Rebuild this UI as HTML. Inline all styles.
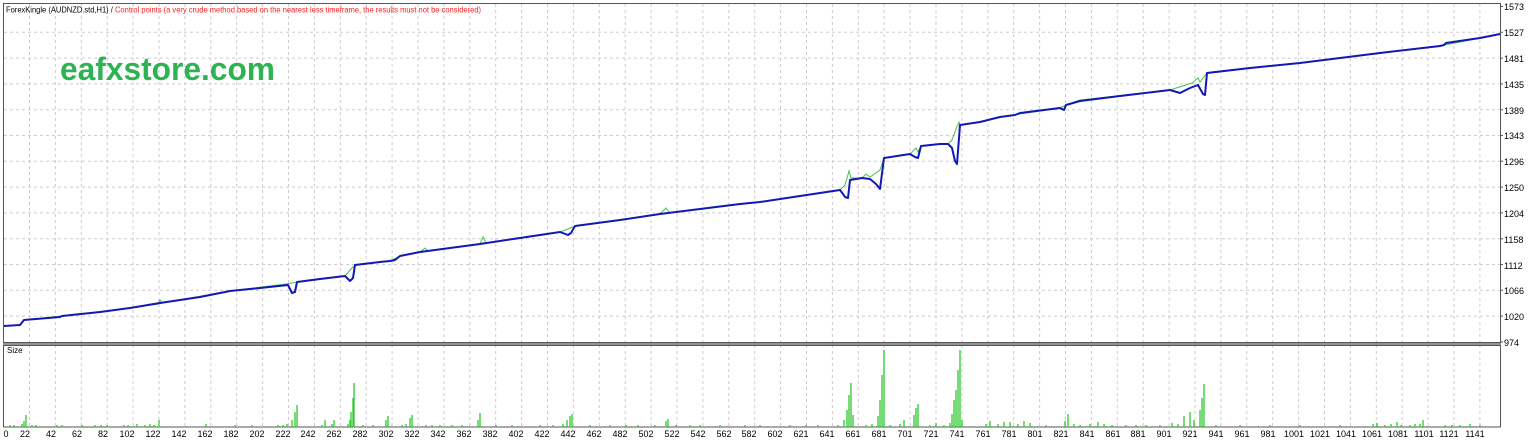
<!DOCTYPE html>
<html><head><meta charset="utf-8"><style>
html,body{margin:0;padding:0;background:#fff;width:1536px;height:441px;overflow:hidden}
svg text{font-family:"Liberation Sans",sans-serif;font-size:9px;fill:#000}
</style></head><body>
<svg width="1536" height="441" viewBox="0 0 1536 441" xmlns="http://www.w3.org/2000/svg">
<rect width="1536" height="441" fill="#fff"/>
<g stroke="#cfcacf" stroke-dasharray="3,3">
<line x1="4" x2="1500" y1="32.3" y2="32.3"/><line x1="4" x2="1500" y1="58.1" y2="58.1"/><line x1="4" x2="1500" y1="83.9" y2="83.9"/><line x1="4" x2="1500" y1="109.7" y2="109.7"/><line x1="4" x2="1500" y1="135.5" y2="135.5"/><line x1="4" x2="1500" y1="161.3" y2="161.3"/><line x1="4" x2="1500" y1="187.1" y2="187.1"/><line x1="4" x2="1500" y1="212.9" y2="212.9"/><line x1="4" x2="1500" y1="238.7" y2="238.7"/><line x1="4" x2="1500" y1="264.5" y2="264.5"/><line x1="4" x2="1500" y1="290.3" y2="290.3"/><line x1="4" x2="1500" y1="316.1" y2="316.1"/>
</g>
<g stroke="#cfcacf" stroke-dasharray="3,3">
<path d="M29.5 4V342M55.4 4V342M81.3 4V342M107.2 4V342M133.1 4V342M159 4V342M184.9 4V342M210.8 4V342M236.7 4V342M262.6 4V342M288.5 4V342M314.4 4V342M340.3 4V342M366.2 4V342M392.1 4V342M418 4V342M443.9 4V342M469.8 4V342M495.7 4V342M521.6 4V342M547.5 4V342M573.4 4V342M599.3 4V342M625.2 4V342M651.1 4V342M677 4V342M702.9 4V342M728.8 4V342M754.7 4V342M780.6 4V342M806.5 4V342M832.4 4V342M858.3 4V342M884.2 4V342M910.1 4V342M936 4V342M961.9 4V342M987.8 4V342M1013.7 4V342M1039.6 4V342M1065.5 4V342M1091.4 4V342M1117.3 4V342M1143.2 4V342M1169.1 4V342M1195 4V342M1220.9 4V342M1246.8 4V342M1272.7 4V342M1298.6 4V342M1324.5 4V342M1350.4 4V342M1376.3 4V342M1402.2 4V342M1428.1 4V342M1454 4V342M1479.9 4V342"/>
<path transform="translate(0,345)" d="M29.5 0V82M55.4 0V82M81.3 0V82M107.2 0V82M133.1 0V82M159 0V82M184.9 0V82M210.8 0V82M236.7 0V82M262.6 0V82M288.5 0V82M314.4 0V82M340.3 0V82M366.2 0V82M392.1 0V82M418 0V82M443.9 0V82M469.8 0V82M495.7 0V82M521.6 0V82M547.5 0V82M573.4 0V82M599.3 0V82M625.2 0V82M651.1 0V82M677 0V82M702.9 0V82M728.8 0V82M754.7 0V82M780.6 0V82M806.5 0V82M832.4 0V82M858.3 0V82M884.2 0V82M910.1 0V82M936 0V82M961.9 0V82M987.8 0V82M1013.7 0V82M1039.6 0V82M1065.5 0V82M1091.4 0V82M1117.3 0V82M1143.2 0V82M1169.1 0V82M1195 0V82M1220.9 0V82M1246.8 0V82M1272.7 0V82M1298.6 0V82M1324.5 0V82M1350.4 0V82M1376.3 0V82M1402.2 0V82M1428.1 0V82M1454 0V82M1479.9 0V82"/>
</g>
<rect x="3.5" y="3.5" width="1497" height="339" fill="none" stroke="#555" stroke-width="1"/>
<line x1="3" x2="1501" y1="344" y2="344" stroke="#555" stroke-width="1.2"/>
<rect x="3.5" y="345.5" width="1497" height="81.5" fill="none" stroke="#555" stroke-width="1"/>
<line x1="3" x2="1501" y1="342.5" y2="342.5" stroke="#555"/>
<polyline fill="none" stroke="#48c048" stroke-width="1" points="4,326 20,325 24,320 100,312 158,304 160,300 162,303 230,291 286,284 292,283 297,282 345,276 352,268 355,265 390,261 400,256 420,252 425,248 428,251 480,244 483,237 486,243 560,232 568,229 575,226 660,214 666,208 670,213 760,202 840,190 845,185 849,171 851,178 862,178 866,174 870,177 880,170 884,158 910,154 916,148 918,152 921,146 940,144 948,144 952,140 956,129 959,122 960,125 980,122 1000,117 1060,108 1066,105 1080,100 1170,90 1192,83 1198,78 1200,82 1207,73 1300,63 1380,53 1440,46 1500,34"/>
<polyline fill="none" stroke="#1218b4" stroke-width="2" stroke-linejoin="round" points="4,326 20,325 24,320 60,317 62,316 100,312 130,308 160,303 200,297 230,291 260,288 288,285 292,293 295,292 297,282 320,279 345,276 350,281 353,278 355,265 380,262 390,261 395,260 400,256 420,252 450,248 480,244 520,238 560,232 568,235 571,233 575,226 620,220 660,214 700,209 740,204 760,202 800,196 840,190 843,194 845,197 848,198 850,180 862,178 870,179 876,184 880,189 884,158 910,154 915,157 918,158 921,146 940,144 948,144 952,148 955,161 957,164 960,125 980,122 1000,117 1015,115 1020,113 1060,108 1064,110 1066,105 1080,101 1120,96 1170,90 1180,93 1190,88 1198,85 1203,94 1205,95 1207,73 1250,68 1300,63 1340,58 1380,53 1440,46 1444,45 1446,43 1480,38 1500,34"/>
<g stroke="#2ec82e" stroke-width="1.3">
<path d="M10 427V425M14 427V425M22 427V424M24 427V421M26 427V415M32 427V425M36 427V425M57 427V425M62 427V425M82 427V425M95 427V425M101 427V425M107 427V425M124 427V425M128 427V425M137 427V424M145 427V425M150 427V424M154 427V425M159 427V420M206 427V424M235 427V425M252 427V425M278 427V425M283 427V425M287 427V424M292 427V420M295 427V412M297 427V405M322 427V425M325 427V420M332 427V424M334 427V420M348 427V424M350 427V420M351 427V412M353 427V398M354 427V383M363 427V425M373 427V425M386 427V420M388 427V416M402 427V425M406 427V424M410 427V418M412 427V415M426 427V425M432 427V425M440 427V425M452 427V425M462 427V425M478 427V420M480 427V413M496 427V425M512 427V425M540 427V425M553 427V425M563 427V424M567 427V420M570 427V416M572 427V414M590 427V425M610 427V425M626 427V425M638 427V425M655 427V425M666 427V421M668 427V419M676 427V425M690 427V425M700 427V425M720 427V425M745 427V425M760 427V425M790 427V425M806 427V425M818 427V425M838 427V425M844 427V420M847 427V410M849 427V395M851 427V383M853 427V415M866 427V425M872 427V424M878 427V416M880 427V400M882 427V375M884 427V350M890 427V425M900 427V424M904 427V420M914 427V415M916 427V408M918 427V404M930 427V425M936 427V423M944 427V425M950 427V423M952 427V414M954 427V400M956 427V390M958 427V370M960 427V350M962 427V420M986 427V424M990 427V421M998 427V424M1004 427V422M1010 427V422M1018 427V424M1024 427V421M1030 427V423M1046 427V425M1065 427V421M1068 427V414M1074 427V424M1080 427V425M1090 427V424M1098 427V422M1104 427V424M1112 427V425M1126 427V425M1136 427V425M1146 427V425M1160 427V425M1172 427V423M1178 427V424M1184 427V416M1190 427V412M1194 427V420M1200 427V410M1202 427V398M1204 427V384M1216 427V425M1240 427V425M1270 427V425M1300 427V425M1340 427V425M1373 427V424M1377 427V423M1385 427V425M1391 427V424M1397 427V422M1401 427V425M1410 427V425M1415 427V424M1420 427V424M1423 427V420M1445 427V425M1452 427V425M1460 427V425M1470 427V424M1480 427V425"/>
</g>
<text x="6" y="12.5" style="font-size:8px" textLength="475" lengthAdjust="spacingAndGlyphs"><tspan>ForexKingle (AUDNZD.std,H1) / </tspan><tspan fill="#ff2020">Control points (a very crude method based on the nearest less timeframe, the results must not be considered)</tspan></text>
<text x="60" y="80" style="font-size:32px;font-weight:bold;fill:#2db352" textLength="215" lengthAdjust="spacingAndGlyphs">eafxstore.com</text>
<text x="7" y="353" style="font-size:8px">Size</text>
<g style="font-size:9px">
<text x="1504" y="10">1573</text><text x="1504" y="36">1527</text><text x="1504" y="62">1481</text><text x="1504" y="88">1435</text><text x="1504" y="114">1389</text><text x="1504" y="139">1343</text><text x="1504" y="165">1296</text><text x="1504" y="191">1250</text><text x="1504" y="217">1204</text><text x="1504" y="243">1158</text><text x="1504" y="269">1112</text><text x="1504" y="294">1066</text><text x="1504" y="320">1020</text><text x="1504" y="346">974</text>
</g>
<g stroke="#555"><path d="M1500 6.5h3M1500 32.3h3M1500 58.1h3M1500 83.9h3M1500 109.7h3M1500 135.5h3M1500 161.3h3M1500 187.1h3M1500 212.9h3M1500 238.7h3M1500 264.5h3M1500 290.3h3M1500 316.1h3M1500 342h3"/></g>
<g text-anchor="middle" style="font-size:9px">
<text x="6" y="437">0</text><text x="25" y="437">22</text><text x="51" y="437">42</text><text x="77" y="437">62</text><text x="103" y="437">82</text><text x="127" y="437">102</text><text x="153" y="437">122</text><text x="179" y="437">142</text><text x="205" y="437">162</text><text x="231" y="437">182</text><text x="257" y="437">202</text><text x="283" y="437">222</text><text x="308" y="437">242</text><text x="334" y="437">262</text><text x="360" y="437">282</text><text x="386" y="437">302</text><text x="412" y="437">322</text><text x="438" y="437">342</text><text x="464" y="437">362</text><text x="490" y="437">382</text><text x="516" y="437">402</text><text x="542" y="437">422</text><text x="568" y="437">442</text><text x="594" y="437">462</text><text x="620" y="437">482</text><text x="646" y="437">502</text><text x="672" y="437">522</text><text x="698" y="437">542</text><text x="724" y="437">562</text><text x="749" y="437">582</text><text x="775" y="437">602</text><text x="801" y="437">621</text><text x="827" y="437">641</text><text x="853" y="437">661</text><text x="879" y="437">681</text><text x="905" y="437">701</text><text x="931" y="437">721</text><text x="957" y="437">741</text><text x="983" y="437">761</text><text x="1009" y="437">781</text><text x="1035" y="437">801</text><text x="1061" y="437">821</text><text x="1087" y="437">841</text><text x="1113" y="437">861</text><text x="1138" y="437">881</text><text x="1164" y="437">901</text><text x="1190" y="437">921</text><text x="1216" y="437">941</text><text x="1242" y="437">961</text><text x="1268" y="437">981</text><text x="1294" y="437">1001</text><text x="1320" y="437">1021</text><text x="1346" y="437">1041</text><text x="1372" y="437">1061</text><text x="1398" y="437">1081</text><text x="1424" y="437">1101</text><text x="1449" y="437">1121</text><text x="1475" y="437">1141</text>
</g>
</svg>
</body></html>
